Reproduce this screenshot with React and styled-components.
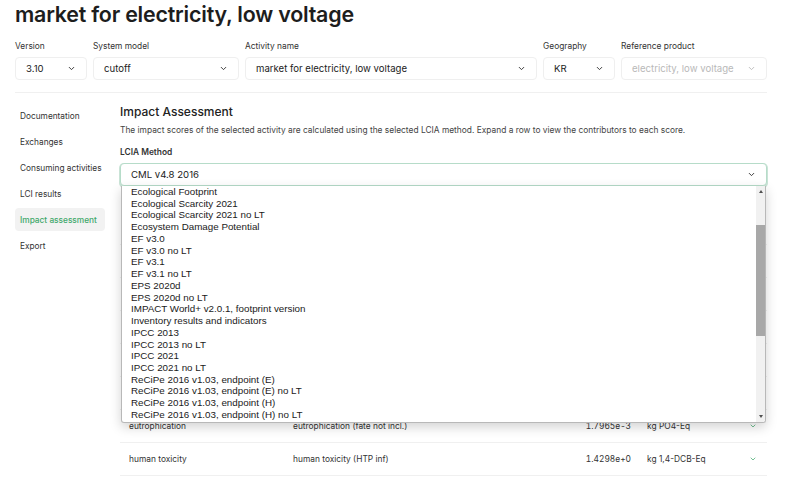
import React from 'react'
import styled, { createGlobalStyle } from 'styled-components'
import { ChevronDown } from 'lucide-react'

const GlobalStyle = createGlobalStyle`
  html, body {
    margin: 0;
    padding: 0;
    background: #fff;
  }
  body {
    font-family: Inter, "Noto Sans", sans-serif;
    color: #222;
  }
`

const Page = styled.div`
  width: 752px;
  padding: 0 15px;
  overflow: hidden;
  height: 477px;
`

const Title = styled.h1`
  margin: 0;
  padding-top: 1px;
  font-size: 21.4px;
  line-height: 26px;
  font-weight: 600;
  letter-spacing: -0.2px;
  color: #1d1d1d;
`

const Filters = styled.div`
  display: flex;
  gap: 6px;
  margin-top: 13px;
  padding-bottom: 12px;
  border-bottom: 1px solid #f0f0f0;
`

const Field = styled.div`
  display: flex;
  flex-direction: column;
  width: ${(p) => p.$w}px;
`

const Label = styled.label`
  display: block;
  font-size: 8.4px;
  line-height: 12px;
  color: #333;
  font-weight: ${(p) => (p.$bold ? 600 : 400)};
  margin-bottom: 5px;
`

const SelectBox = styled.div`
  display: flex;
  align-items: center;
  justify-content: space-between;
  height: 23px;
  box-sizing: border-box;
  padding: 0 10px 0 10px;
  border: 1px solid ${(p) => (p.$focus ? '#b6dcc9' : '#efefef')};
  box-shadow: ${(p) => (p.$focus ? '0 1px 0 1px #c9e3d6' : 'none')};
  border-radius: 4px;
  font-size: 9.6px;
  white-space: nowrap;
  color: ${(p) => (p.$disabled ? '#b9b9b9' : '#222')};
  background: #fff;

  svg {
    color: ${(p) => (p.$disabled ? '#bbb' : '#333')};
    flex-shrink: 0;
  }
`

const Body = styled.div`
  display: flex;
  gap: 15px;
  margin-top: 9px;
`

const Sidebar = styled.nav`
  width: 90px;
  flex-shrink: 0;
  display: flex;
  flex-direction: column;
  gap: 3px;
  padding-top: 2px;
`

const NavItem = styled.div`
  height: 23px;
  display: flex;
  align-items: center;
  padding-left: 5px;
  border-radius: 4px;
  font-size: 8.3px;
  white-space: nowrap;
  color: ${(p) => (p.$active ? '#3fa86b' : '#333')};
  background: ${(p) => (p.$active ? '#f2f2f2' : 'transparent')};
  font-weight: ${(p) => (p.$active ? 500 : 400)};
`

const Main = styled.main`
  flex: 1;
  position: relative;
  padding-top: 2px;
`

const SectionTitle = styled.h2`
  margin: 0;
  font-size: 12px;
  line-height: 16px;
  font-weight: 500;
  color: #222;
`

const Description = styled.p`
  margin: 4px 0 10px;
  font-size: 8.4px;
  line-height: 12px;
  color: #444;
`

const MethodWrap = styled.div`
  position: relative;
`

const Dropdown = styled.div`
  position: absolute;
  top: 23px;
  left: 1px;
  right: 1px;
  height: 236px;
  display: flex;
  background: #fff;
  border: 1px solid #b8b8b8;
  border-top: none;
  border-radius: 0 0 3px 3px;
  box-shadow: 0 4px 12px rgba(0, 0, 0, 0.18);
  z-index: 5;
  overflow: hidden;
`

const OptionList = styled.ul`
  list-style: none;
  margin: 0;
  padding: 0;
  flex: 1;
  font-family: "Liberation Sans", Arial, sans-serif;
  font-size: 9.8px;
  color: #1a1a1a;
`

const Option = styled.li`
  height: 11.74px;
  line-height: 11.74px;
  padding-left: 9px;
  white-space: nowrap;
`

const Scrollbar = styled.div`
  width: 9px;
  background: #f1f1f1;
  display: flex;
  flex-direction: column;
  align-items: center;
`

const Arrow = styled.div`
  width: 0;
  height: 0;
  margin: 4px 0;
  border-left: 2.5px solid transparent;
  border-right: 2.5px solid transparent;
  ${(p) => (p.$down ? 'border-top: 3px solid #505050;' : 'border-bottom: 3px solid #505050;')}
`

const Track = styled.div`
  flex: 1;
  width: 100%;
  display: flex;
  flex-direction: column;
`

const Thumb = styled.div`
  width: 100%;
  background: #a8a8a8;
  margin-top: 28px;
  height: 111px;
`

const Table = styled.div`
  margin-top: 26px;
  display: flex;
  flex-direction: column;
`

const Row = styled.div`
  display: grid;
  grid-template-columns: 164px 230px 108px 100px 1fr;
  align-items: center;
  height: 33px;
  box-sizing: border-box;
  border-bottom: 1px solid #f0f0f0;
  padding-left: 9px;
  font-size: 8.4px;
  color: #333;
`

const Num = styled.span`
  text-align: right;
  font-variant-numeric: tabular-nums;
`

const Unit = styled.span`
  padding-left: 16px;
`

const Expand = styled.span`
  display: flex;
  justify-content: flex-end;
  padding-right: 10px;
  color: #3fa86b;
`

const filters = [
  { label: 'Version', value: '3.10', w: 72 },
  { label: 'System model', value: 'cutoff', w: 146 },
  { label: 'Activity name', value: 'market for electricity, low voltage', w: 292 },
  { label: 'Geography', value: 'KR', w: 72 },
  { label: 'Reference product', value: 'electricity, low voltage', w: 146, disabled: true }
]

const navItems = [
  'Documentation',
  'Exchanges',
  'Consuming activities',
  'LCI results',
  'Impact assessment',
  'Export'
]

const methods = [
  'Ecological Footprint',
  'Ecological Scarcity 2021',
  'Ecological Scarcity 2021 no LT',
  'Ecosystem Damage Potential',
  'EF v3.0',
  'EF v3.0 no LT',
  'EF v3.1',
  'EF v3.1 no LT',
  'EPS 2020d',
  'EPS 2020d no LT',
  'IMPACT World+ v2.0.1, footprint version',
  'Inventory results and indicators',
  'IPCC 2013',
  'IPCC 2013 no LT',
  'IPCC 2021',
  'IPCC 2021 no LT',
  'ReCiPe 2016 v1.03, endpoint (E)',
  'ReCiPe 2016 v1.03, endpoint (E) no LT',
  'ReCiPe 2016 v1.03, endpoint (H)',
  'ReCiPe 2016 v1.03, endpoint (H) no LT'
]

const scores = [
  ['acidification', 'acidification (incl. fate, average Europe total, A&B)', '2.1734e-3', 'kg SO2-Eq'],
  ['climate change', 'global warming potential (GWP100)', '5.3581e-1', 'kg CO2-Eq'],
  ['ecotoxicity: freshwater', 'freshwater aquatic ecotoxicity (FAETP inf)', '6.8812e-1', 'kg 1,4-DCB-Eq'],
  ['ecotoxicity: marine', 'marine aquatic ecotoxicity (MAETP inf)', '1.6903e+3', 'kg 1,4-DCB-Eq'],
  ['ecotoxicity: terrestrial', 'terrestrial ecotoxicity (TETP inf)', '2.0716e-3', 'kg 1,4-DCB-Eq'],
  ['energy resources: non-renewable', 'abiotic depletion potential (ADP): fossil fuels', '9.1206e+0', 'MJ'],
  ['eutrophication', 'eutrophication (fate not incl.)', '1.7965e-3', 'kg PO4-Eq'],
  ['human toxicity', 'human toxicity (HTP inf)', '1.4298e+0', 'kg 1,4-DCB-Eq']
]

export default function App () {
  return (
    <>
      <GlobalStyle />
      <Page>
        <Title>market for electricity, low voltage</Title>
        <Filters>
          {filters.map((f) => (
            <Field key={f.label} $w={f.w}>
              <Label>{f.label}</Label>
              <SelectBox $disabled={f.disabled}>
                <span>{f.value}</span>
                <ChevronDown size={9} strokeWidth={2.5} />
              </SelectBox>
            </Field>
          ))}
        </Filters>
        <Body>
          <Sidebar>
            {navItems.map((item) => (
              <NavItem key={item} $active={item === 'Impact assessment'}>{item}</NavItem>
            ))}
          </Sidebar>
          <Main>
            <SectionTitle>Impact Assessment</SectionTitle>
            <Description>
              The impact scores of the selected activity are calculated using the selected LCIA method. Expand a row to view the contributors to each score.
            </Description>
            <Label $bold>LCIA Method</Label>
            <MethodWrap>
              <SelectBox $focus>
                <span>CML v4.8 2016</span>
                <ChevronDown size={9} strokeWidth={2.5} />
              </SelectBox>
              <Dropdown>
                <OptionList>
                  {methods.map((m) => (
                    <Option key={m}>{m}</Option>
                  ))}
                </OptionList>
                <Scrollbar>
                  <Arrow />
                  <Track>
                    <Thumb />
                  </Track>
                  <Arrow $down />
                </Scrollbar>
              </Dropdown>
            </MethodWrap>
            <Table>
              {scores.map((s) => (
                <Row key={s[0]}>
                  <span>{s[0]}</span>
                  <span>{s[1]}</span>
                  <Num>{s[2]}</Num>
                  <Unit>{s[3]}</Unit>
                  <Expand><ChevronDown size={8} strokeWidth={2.2} /></Expand>
                </Row>
              ))}
            </Table>
          </Main>
        </Body>
      </Page>
    </>
  )
}
